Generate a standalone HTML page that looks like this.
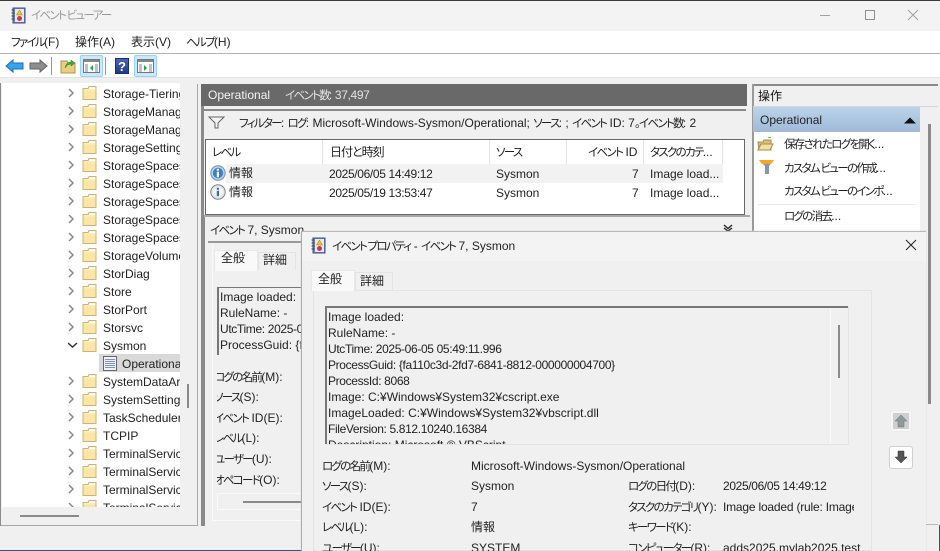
<!DOCTYPE html>
<html><head><meta charset="utf-8">
<style>
html,body{margin:0;padding:0;width:940px;height:551px;overflow:hidden}
body{background:#f0f0f0;font-family:"Liberation Sans","Noto Sans CJK JP",sans-serif;font-size:12px;color:#222;font-feature-settings:"palt" 1}
#r{position:absolute;left:0;top:0;width:940px;height:551px;overflow:hidden}
div,svg{position:absolute}
.t{white-space:nowrap;line-height:16px;height:16px;margin-top:-8px}
.n{letter-spacing:-.35px}
.k{font-size:11.5px;letter-spacing:-1.7px}
.tree{left:2px;top:83px;width:178px;height:424px;background:#fff;overflow:hidden}
.clip{overflow:hidden}
</style></head><body><div id="r">
<svg width="0" height="0" style="left:0;top:0"><defs>
<g id="folder"><path d="M1 3.500h5l1-2h7v13H1z" fill="#fdeebd" stroke="#cdb27a"/><path d="M1.500 5.500h12v8.500h-12z" fill="#fce6a6"/><path d="M7 2.500h6.500v1.500H7z" fill="#fff"/></g>
<path id="chev" d="M1 1l4 4-4 4" fill="none" stroke="#8a8a8a" stroke-width="1.500"/>
<g id="book"><rect x="3" y="1" width="12" height="15" fill="#6f86b8" stroke="#3d4f80"/><rect x="5" y="2" width="9" height="13" fill="#e8e8f4"/><path d="M1.500 3h3M1.500 6h3M1.500 9h3M1.500 12h3" stroke="#444" stroke-width="1"/><path d="M9.500 3l3 5h-6z" fill="#f5c518" stroke="#a07a00" stroke-width=".5"/><circle cx="9.500" cy="11.500" r="2.500" fill="#c8384a"/></g>
<g id="info"><circle cx="8" cy="8" r="7.200" fill="#b9d3ee" stroke="#7b8ea5"/><circle cx="8" cy="8" r="5.200" fill="#3f7fc4"/><path d="M6.800 3.800h2.200v2H6.800zM6.800 6.800h2.200v5.500H6.800z" fill="#fff"/></g>
<g id="info2"><circle cx="8" cy="8" r="7.200" fill="#e4e4e4" stroke="#858585"/><circle cx="8" cy="8" r="5.200" fill="#f4f4f4"/><path d="M6.800 3.800h2.200v2H6.800zM6.800 6.800h2.200v5.500H6.800z" fill="#2f6fb5"/></g>
</defs></svg>

<!-- window chrome -->
<div style="left:0;top:0;width:940px;height:1px;background:#3a3a3a"></div>
<div style="left:0;top:1px;width:940px;height:30px;background:#f3f3f3"></div>
<svg style="left:10px;top:7px" width="18" height="18"><use href="#book"/></svg>
<div class="t" style="left:31px;top:15px;color:#9a9a9a"><span class="k">イベント ビューアー</span></div>
<svg style="left:820px;top:9px" width="100" height="14"><path d="M0 6.500h10" stroke="#a0a0a0"/><rect x="45.500" y="1.500" width="9" height="9" fill="none" stroke="#909090"/><path d="M88 1l10 10M98 1L88 11" stroke="#a0a0a0"/></svg>
<div style="left:0;top:31px;width:940px;height:22px;background:#fff"></div>
<div class="t" style="left:11px;top:42px;color:#222"><span class="k">ファイル</span>(F)</div>
<div class="t" style="left:75px;top:42px">操作(A)</div>
<div class="t" style="left:131px;top:42px">表示(V)</div>
<div class="t" style="left:186px;top:42px"><span class="k">ヘルプ</span>(H)</div>
<div style="left:0;top:53px;width:940px;height:1px;background:#b4b4bc"></div>
<div style="left:0;top:54px;width:940px;height:24px;background:#fff"></div>
<div style="left:0;top:77px;width:940px;height:1px;background:#e4e4e4"></div>
<svg style="left:5px;top:58px" width="20" height="16"><path d="M1 8l7-6v3h10v6H8v3z" fill="#35a2ee" stroke="#1f6fb5"/></svg>
<svg style="left:28px;top:58px" width="20" height="16"><path d="M19 8l-7-6v3H2v6h10v3z" fill="#8d8d8d" stroke="#666"/></svg>
<div style="left:51px;top:57px;width:1px;height:18px;background:#999"></div>
<svg style="left:60px;top:58px" width="17" height="17"><path d="M1 3h6l1 2h7v10H1z" fill="#e9cd80" stroke="#b1934a"/><path d="M5 10c1-4 3-6 6-6V2l4 3-4 3V6c-2 0-4 1-6 4z" fill="#3cae3c" stroke="#1e7a1e" stroke-width=".5"/></svg>
<div style="left:80px;top:55px;width:21px;height:20px;background:#cce8ff;border:1px solid #99d1ff;border-radius:2px"></div>
<svg style="left:83px;top:59px" width="18" height="15"><rect x=".5" y=".5" width="16" height="13" fill="#fff" stroke="#777"/><path d="M1 1h15v2H1z" fill="#888"/><path d="M2 5h3v8H2zM12 5h3v8h-3z" fill="#b8c4d6"/><path d="M10 6v6L7 9z" fill="#22a83a"/></svg>
<div style="left:105px;top:57px;width:1px;height:18px;background:#999"></div>
<div style="left:115px;top:58px;width:12px;height:14px;background:linear-gradient(#4a63b8,#1f3a8a);border:1px solid #1a2f70;color:#fff;font-weight:bold;font-size:13px;line-height:15px;text-align:center">?</div>
<div style="left:134px;top:55px;width:21px;height:20px;background:#cce8ff;border:1px solid #99d1ff;border-radius:2px"></div>
<svg style="left:137px;top:59px" width="18" height="15"><rect x=".5" y=".5" width="16" height="13" fill="#fff" stroke="#777"/><path d="M1 1h15v2H1z" fill="#888"/><path d="M2 5h3v8H2zM12 5h3v8h-3z" fill="#b8c4d6"/><path d="M7 6v6l3-3z" fill="#22a83a"/></svg>

<!-- tree -->
<div class="tree">
<svg style="left:66px;top:5px" width="10" height="420"><use href="#chev" y="0"/><use href="#chev" y="18"/><use href="#chev" y="36"/><use href="#chev" y="54"/><use href="#chev" y="72"/><use href="#chev" y="90"/><use href="#chev" y="108"/><use href="#chev" y="126"/><use href="#chev" y="144"/><use href="#chev" y="162"/><use href="#chev" y="180"/><use href="#chev" y="198"/><use href="#chev" y="216"/><use href="#chev" y="234"/><path d="M0 255l4.500 4 4.500-4" fill="none" stroke="#333" stroke-width="1.500"/><use href="#chev" y="288"/><use href="#chev" y="306"/><use href="#chev" y="324"/><use href="#chev" y="342"/><use href="#chev" y="360"/><use href="#chev" y="378"/><use href="#chev" y="396"/><use href="#chev" y="414"/></svg>
<svg style="left:80px;top:0" width="16" height="424"><use href="#folder" y="2"/><use href="#folder" y="20"/><use href="#folder" y="38"/><use href="#folder" y="56"/><use href="#folder" y="74"/><use href="#folder" y="92"/><use href="#folder" y="110"/><use href="#folder" y="128"/><use href="#folder" y="146"/><use href="#folder" y="164"/><use href="#folder" y="182"/><use href="#folder" y="200"/><use href="#folder" y="218"/><use href="#folder" y="236"/><use href="#folder" y="254"/><use href="#folder" y="290"/><use href="#folder" y="308"/><use href="#folder" y="326"/><use href="#folder" y="344"/><use href="#folder" y="362"/><use href="#folder" y="380"/><use href="#folder" y="398"/><use href="#folder" y="416"/></svg>
<div class="t" style="left:101px;top:11px">Storage-Tiering</div>
<div class="t" style="left:101px;top:29px">StorageManag</div>
<div class="t" style="left:101px;top:47px">StorageManag</div>
<div class="t" style="left:101px;top:65px">StorageSetting</div>
<div class="t" style="left:101px;top:83px">StorageSpaces</div>
<div class="t" style="left:101px;top:101px">StorageSpaces</div>
<div class="t" style="left:101px;top:119px">StorageSpaces</div>
<div class="t" style="left:101px;top:137px">StorageSpaces</div>
<div class="t" style="left:101px;top:155px">StorageSpaces</div>
<div class="t" style="left:101px;top:173px">StorageVolume</div>
<div class="t" style="left:101px;top:191px">StorDiag</div>
<div class="t" style="left:101px;top:209px">Store</div>
<div class="t" style="left:101px;top:227px">StorPort</div>
<div class="t" style="left:101px;top:245px">Storsvc</div>
<div class="t" style="left:101px;top:263px">Sysmon</div>
<div style="left:97px;top:271px;width:81px;height:18px;background:#d9d9d9"></div>
<svg style="left:101px;top:273px" width="15" height="15"><rect x=".5" y=".5" width="13" height="14" fill="#eef1f8" stroke="#666"/><path d="M2 3.500h10M2 5.500h10M2 7.500h10M2 9.500h10M2 11.500h10" stroke="#7f93b8"/></svg>
<div class="t" style="left:120px;top:281px">Operationa</div>
<div class="t" style="left:101px;top:299px">SystemDataArc</div>
<div class="t" style="left:101px;top:317px">SystemSettings</div>
<div class="t" style="left:101px;top:335px">TaskScheduler</div>
<div class="t" style="left:101px;top:353px">TCPIP</div>
<div class="t" style="left:101px;top:371px">TerminalServic</div>
<div class="t" style="left:101px;top:389px">TerminalServic</div>
<div class="t" style="left:101px;top:407px">TerminalServic</div>
<div class="t" style="left:101px;top:425px">TerminalServic</div>
</div>
<div style="left:187px;top:384px;width:2px;height:24px;background:#8a8a8a"></div>
<div style="left:20px;top:515px;width:59px;height:2px;background:#8a8a8a"></div>
<div style="left:0;top:83px;width:1px;height:444px;background:#8a8a8a"></div>
<div style="left:1px;top:525px;width:197px;height:1px;background:#a8a8a8"></div>
<div style="left:197px;top:84px;width:1px;height:441px;background:#a8a8a8"></div>
<div style="left:201px;top:84px;width:3px;height:442px;background:#8a8a8a"></div>

<!-- center -->
<div style="left:201px;top:84px;width:546px;height:22px;background:#696969"></div>
<div class="t" style="left:208px;top:95px;color:#f4f4f4">Operational</div>
<div class="t n" style="left:285px;top:95px;color:#e4e4e4"><span class="k">イベント数</span>: 37,497</div>
<div style="left:204px;top:109px;width:542px;height:2px;background:#8a8a8a"></div>
<svg style="left:208px;top:116px" width="17" height="13"><path d="M1 1h15l-6 6v5H7V7z" fill="#f4f4f4" stroke="#666"/></svg>
<div class="t" style="left:239px;top:123px"><span class="k">フィルター</span>: <span class="k">ログ</span>: Microsoft-Windows-Sysmon/Operational; <span class="k">ソース</span>: ; <span class="k">イベント</span> ID: 7<span class="k">。イベント数</span>: 2</div>
<div style="left:205px;top:139px;width:538px;height:74px;background:#fff;border:1px solid #666"></div>
<div style="left:322px;top:140px;width:1px;height:24px;background:#e5e5e5"></div>
<div style="left:489px;top:140px;width:1px;height:24px;background:#e5e5e5"></div>
<div style="left:566px;top:140px;width:1px;height:24px;background:#e5e5e5"></div>
<div style="left:643px;top:140px;width:1px;height:24px;background:#e5e5e5"></div>
<div style="left:722px;top:140px;width:1px;height:24px;background:#e5e5e5"></div>
<div class="t" style="left:212px;top:152px"><span class="k">レベル</span></div>
<div class="t" style="left:330px;top:152px;letter-spacing:-1px">日付と時刻</div>
<div class="t" style="left:496px;top:152px"><span class="k">ソース</span></div>
<div class="t" style="left:588px;top:152px"><span class="k">イベント</span> ID</div>
<div class="t" style="left:650px;top:152px"><span class="k">タスクのカテ</span>...</div>
<div style="left:226px;top:164px;width:497px;height:19px;background:#f2f2f2"></div>
<svg style="left:210px;top:165px" width="16" height="16"><use href="#info"/></svg>
<svg style="left:210px;top:184px" width="16" height="16"><use href="#info2"/></svg>
<div class="t" style="left:229px;top:173px">情報</div>
<div class="t n" style="left:329px;top:174px">2025/06/05 14:49:12</div>
<div class="t" style="left:496px;top:174px">Sysmon</div>
<div class="t" style="left:632px;top:174px">7</div>
<div class="t" style="left:650px;top:174px">Image load...</div>
<div class="t" style="left:229px;top:192px">情報</div>
<div class="t n" style="left:329px;top:193px">2025/05/19 13:53:47</div>
<div class="t" style="left:496px;top:193px">Sysmon</div>
<div class="t" style="left:632px;top:193px">7</div>
<div class="t" style="left:650px;top:193px">Image load...</div>

<div style="left:204px;top:215px;width:546px;height:2px;background:#a8a8a8"></div>
<div class="t" style="left:210px;top:230px"><span class="k">イベント</span> 7, Sysmon</div>
<svg style="left:723px;top:224px" width="10" height="8"><path d="M1 1l4 3.500L9 1M1 4l4 3 4-3" fill="none" stroke="#222" stroke-width="1.300"/></svg>
<div style="left:208px;top:241px;width:94px;height:2px;background:#999"></div>
<div style="left:214px;top:250px;width:44px;height:21px;background:#f9f9f9;border:1px solid #e8e8e8;border-bottom:0;box-sizing:border-box"></div>
<div style="left:258px;top:252px;width:38px;height:18px;background:#f0f0f0;border:1px solid #e4e4e4;border-bottom:0;box-sizing:border-box"></div>
<div class="t" style="left:221px;top:258px">全般</div>
<div class="t" style="left:263px;top:260px">詳細</div>
<div style="left:217px;top:287px;width:2px;height:68px;background:#777"></div>
<div style="left:217px;top:287px;width:85px;height:1px;background:#777"></div>
<div class="t" style="left:220px;top:297px">Image loaded:</div>
<div class="t" style="left:220px;top:313px">RuleName: -</div>
<div class="t n" style="left:220px;top:329px">UtcTime: 2025-0</div>
<div class="t" style="left:220px;top:345px">ProcessGuid: {fa</div>
<div class="clip" style="left:217px;top:360px;width:85px;height:130px">
<div class="t" style="left:-3px;top:17px"><span class="k">ログの名前</span>(M):</div>
<div class="t" style="left:-3px;top:37px"><span class="k">ソース</span>(S):</div>
<div class="t" style="left:-3px;top:58px"><span class="k">イベント</span> ID(E):</div>
<div class="t" style="left:-3px;top:78px"><span class="k">レベル</span>(L):</div>
<div class="t" style="left:-3px;top:99px"><span class="k">ユーザー</span>(U):</div>
<div class="t" style="left:-3px;top:120px"><span class="k">オペコード</span>(O):</div>
</div>
<div style="left:217px;top:493px;width:85px;height:17px;border-top:1px solid #fafafa;border-bottom:1px solid #fafafa;border-left:1px solid #fafafa;box-sizing:border-box"></div>
<div style="left:243px;top:501px;width:59px;height:2px;background:#8a8a8a"></div>
<div style="left:204px;top:217px;width:1px;height:309px;background:#8a8a8a"></div>
<div style="left:212px;top:520px;width:90px;height:1px;background:#fafafa"></div>
<div style="left:212px;top:245px;width:1px;height:275px;background:#fafafa"></div>

<!-- right pane -->
<div style="left:752px;top:84px;width:186px;height:2px;background:#8a8a8a"></div>
<div style="left:752px;top:84px;width:2px;height:441px;background:#9a9a9a"></div>
<div class="t" style="left:758px;top:96px;color:#111">操作</div>
<div style="left:753px;top:106px;width:185px;height:1px;background:#d8d8d8"></div>
<div style="left:754px;top:107px;width:184px;height:418px;background:#f0f0f0"></div>
<div style="left:754px;top:107px;width:166px;height:418px;background:#fff"></div>
<div style="left:753px;top:107px;width:167px;height:25px;background:linear-gradient(#bcd4ea,#9fb9d8)"></div>
<div class="t" style="left:760px;top:120px">Operational</div>
<svg style="left:904px;top:117px" width="12" height="7"><path d="M0 6.500L6 .5l6 6z" fill="#111"/></svg>
<div style="left:928px;top:124px;width:3px;height:280px;background:#8a8a8a"></div>
<svg style="left:757px;top:136px" width="18" height="17"><path d="M1 6h5l1-2h7v10H2z" fill="#d9c078" stroke="#a58d4e"/><path d="M1 14l3-6h12l-3 6z" fill="#f1dfa4" stroke="#a58d4e"/><path d="M11 1.500h3" stroke="#58c858"/></svg>
<svg style="left:758px;top:159px" width="17" height="17"><path d="M1 1h15l-5 6v8H7V7z" fill="#8a97a8"/><path d="M1 1h15l-3 4H4z" fill="#f5a623"/></svg>
<div class="t" style="left:784px;top:144px"><span class="k">保存されたログを開く</span>...</div>
<div class="t" style="left:784px;top:168px"><span class="k">カスタム ビューの作成</span>...</div>
<div class="t" style="left:784px;top:191px"><span class="k">カスタム ビューのインポ</span>...</div>
<div style="left:758px;top:204px;width:157px;height:1px;background:#e8e8e8"></div>
<div class="t" style="left:784px;top:216px"><span class="k">ログの消去</span>...</div>

<!-- bottom -->
<div style="left:0;top:526px;width:940px;height:25px;background:#f0f0f0"></div>
<div style="left:0;top:550px;width:301px;height:1px;background:#2f4f86"></div>
<div style="left:926px;top:524px;width:14px;height:1px;background:#b8b8b8"></div>
<div style="left:938px;top:84px;width:2px;height:467px;background:#f0f0f0"></div>
<div style="left:939px;top:525px;width:1px;height:26px;background:#2f4f86"></div>

<!-- dialog -->
<div style="left:301px;top:231px;width:625px;height:320px;background:#f0f0f0;border-left:1px solid #aaa;border-top:1px solid #b8b8b8;box-sizing:border-box;box-shadow:0 0 1px #ccc"></div>
<div style="left:302px;top:232px;width:624px;height:29px;background:#f3f3f3"></div>
<svg style="left:310px;top:237px" width="18" height="18"><use href="#book"/></svg>
<div class="t" style="left:332px;top:246px"><span class="k">イベント プロパティ</span> - <span class="k">イベント</span> 7, Sysmon</div>
<svg style="left:905px;top:239px" width="12" height="12"><path d="M1 1l10 10M11 1L1 11" stroke="#222" stroke-width="1"/></svg>

<div style="left:313px;top:290px;width:559px;height:261px;border:1px solid #e4e4e4;box-sizing:border-box;background:#f0f0f0"></div>
<div style="left:311px;top:270px;width:44px;height:21px;background:#f9f9f9;border:1px solid #e8e8e8;border-bottom:0;box-sizing:border-box"></div>
<div style="left:355px;top:272px;width:38px;height:18px;background:#f0f0f0;border:1px solid #e4e4e4;border-bottom:0;box-sizing:border-box"></div>
<div class="t" style="left:318px;top:279px">全般</div>
<div class="t" style="left:360px;top:281px">詳細</div>

<div style="left:325px;top:306px;width:524px;height:139px;background:#f0f0f0;border:1px solid #e4e4e4;box-sizing:border-box"></div>
<div style="left:325px;top:306px;width:523px;height:2px;background:#777"></div>
<div style="left:325px;top:306px;width:2px;height:138px;background:#777"></div>
<div style="left:830px;top:308px;width:1px;height:136px;background:#fafafa"></div>
<div style="left:838px;top:325px;width:2px;height:53px;background:#8a8a8a"></div>
<div class="clip" style="left:327px;top:308px;width:500px;height:136px">
<div class="t" style="left:1px;top:9px">Image loaded:</div>
<div class="t" style="left:1px;top:25px">RuleName: -</div>
<div class="t n" style="left:1px;top:41px">UtcTime: 2025-06-05 05:49:11.996</div>
<div class="t n" style="left:1px;top:57px">ProcessGuid: {fa110c3d-2fd7-6841-8812-000000004700}</div>
<div class="t n" style="left:1px;top:73px">ProcessId: 8068</div>
<div class="t" style="left:1px;top:89px">Image: C:¥Windows¥System32¥cscript.exe</div>
<div class="t" style="left:1px;top:105px">ImageLoaded: C:¥Windows¥System32¥vbscript.dll</div>
<div class="t n" style="left:1px;top:121px">FileVersion: 5.812.10240.16384</div>
<div class="t" style="left:1px;top:137px">Description: Microsoft ® VBScript</div>
</div>

<div style="left:890px;top:410px;width:22px;height:22px;background:#f6f6f6;border:1px solid #ececec;border-radius:3px;box-sizing:border-box"></div>
<div style="left:893px;top:413px;width:16px;height:16px;background:#cfcfcf"></div>
<svg style="left:894px;top:413px" width="14" height="16"><path d="M7 2l6 6h-3v6H4V8H1z" fill="#8f9a98" stroke="#777" stroke-width=".5"/></svg>
<div style="left:889px;top:446px;width:24px;height:23px;background:#fff;border:1px solid #cfcfcf;border-radius:3px;box-sizing:border-box"></div>
<svg style="left:894px;top:449px" width="14" height="16"><path d="M4 2h6v6h3l-6 6-6-6h3z" fill="#555" stroke="#333" stroke-width=".5"/></svg>

<div class="t" style="left:322px;top:466px"><span class="k">ログの名前</span>(M):</div>
<div class="t" style="left:471px;top:466px">Microsoft-Windows-Sysmon/Operational</div>
<div class="t" style="left:322px;top:486px"><span class="k">ソース</span>(S):</div>
<div class="t" style="left:471px;top:486px">Sysmon</div>
<div class="t" style="left:628px;top:486px"><span class="k">ログの日付</span>(D):</div>
<div class="t n" style="left:723px;top:486px">2025/06/05 14:49:12</div>
<div class="t" style="left:322px;top:507px"><span class="k">イベント</span> ID(E):</div>
<div class="t" style="left:471px;top:507px">7</div>
<div class="t" style="left:628px;top:507px"><span class="k">タスクのカテゴリ</span>(Y):</div>
<div class="t" style="left:723px;top:507px;width:131px;overflow:hidden;letter-spacing:-.2px">Image loaded (rule: Image</div>
<div class="t" style="left:322px;top:527px"><span class="k">レベル</span>(L):</div>
<div class="t" style="left:471px;top:527px">情報</div>
<div class="t" style="left:628px;top:527px"><span class="k">キーワード</span>(K):</div>
<div class="t" style="left:322px;top:548px"><span class="k">ユーザー</span>(U):</div>
<div class="t" style="left:471px;top:548px">SYSTEM</div>
<div class="t" style="left:628px;top:548px"><span class="k">コンピューター</span>(R):</div>
<div class="t" style="left:723px;top:548px">adds2025.mylab2025.test</div>
</div></body></html>
